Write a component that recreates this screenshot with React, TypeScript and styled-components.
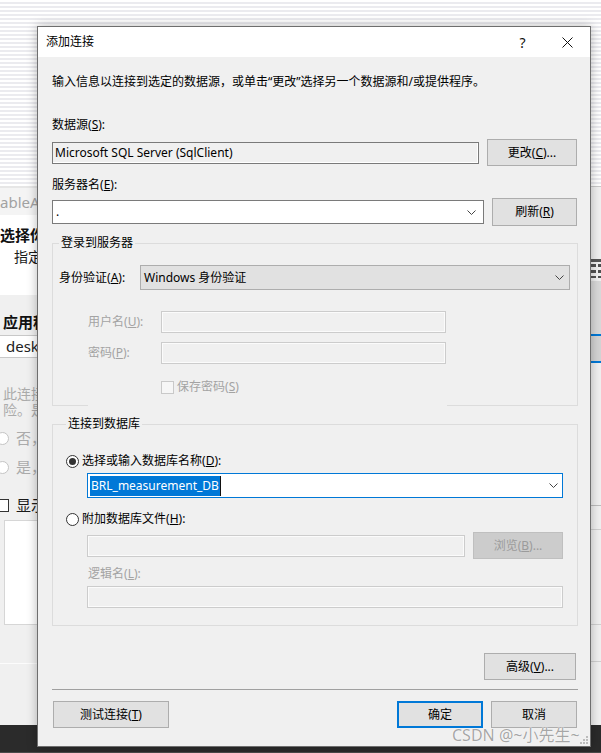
import React from "react";
import styled, { createGlobalStyle } from "styled-components";

const UI = `"Noto Sans", "Noto Sans CJK SC", sans-serif`;

const GlobalStyle = createGlobalStyle`
  html, body { margin: 0; padding: 0; background: #ffffff; }
  body { font-family: ${UI}; }
  * { box-sizing: border-box; }
`;

/* ---------- desktop / background window ---------- */

const Desktop = styled.div`
  position: relative;
  width: 601px;
  height: 753px;
  overflow: hidden;
  display: flex;
  flex-direction: column;
  background: #ffffff;
`;

const Stripes = styled.div`
  height: 186px;
  flex: none;
  background: repeating-linear-gradient(to bottom, #ffffff 0 2px, #ebebef 2px 4px);
`;

const BackBody = styled.div`
  flex: 1;
  display: grid;
  grid-template-columns: 1fr 11px;
  min-height: 0;
`;

const LeftPane = styled.div`
  display: flex;
  flex-direction: column;
  overflow: hidden;
  white-space: nowrap;
  font-family: ${UI};
  font-size: 15px;
  border-top: 2px solid #e6e6e6;
`;

const HintRow = styled.div`
  height: 27px;
  flex: none;
  line-height: 29px;
  background: #f4f4f4;
  color: #a2a2a2;
`;

const WhiteBlock = styled.div`
  height: 80px;
  flex: none;
  background: #ffffff;
  display: flex;
  flex-direction: column;
`;

const BackHeading = styled.div<{ $top: number; $left?: number }>`
  margin-top: ${(p) => p.$top}px;
  padding-left: ${(p) => p.$left ?? 0}px;
  line-height: 18px;
  font-weight: 700;
  color: #111;
`;

const BackText = styled.div<{ $top: number; $left?: number; $muted?: boolean }>`
  margin-top: ${(p) => p.$top}px;
  padding-left: ${(p) => p.$left ?? 0}px;
  font-size: 14px;
  line-height: 16px;
  color: ${(p) => (p.$muted ? "#ababab" : "#1a1a1a")};
`;

const BackPara = styled.div`
  margin-top: 28px;
  padding-left: 3px;
  font-size: 14px;
  line-height: 16px;
  white-space: pre;
  color: #ababab;
`;

const GrayBlock = styled.div`
  flex: 1;
  background: #f0f0f0;
  display: flex;
  flex-direction: column;
`;

const BackInput = styled.div`
  margin-top: 4px;
  margin-left: -1px;
  height: 23px;
  background: #ffffff;
  border: 1px solid #c8c8c8;
  padding-left: 6px;
  line-height: 21px;
  color: #222;
`;

const BackOptionRow = styled.div<{ $top: number; $muted?: boolean }>`
  margin-top: ${(p) => p.$top}px;
  height: 16px;
  display: flex;
  align-items: center;
  gap: 7px;
  margin-left: -4px;
  color: ${(p) => (p.$muted ? "#ababab" : "#1a1a1a")};
  line-height: 16px;
`;

const BackRadio = styled.span`
  width: 13px;
  height: 13px;
  flex: none;
  border-radius: 50%;
  border: 1px solid #c4c4c4;
  background: #fff;
`;

const BackCheck = styled.span`
  width: 13px;
  height: 13px;
  flex: none;
  border: 1px solid #333;
  background: #fff;
`;

const BackPanel = styled.div`
  margin-top: 7px;
  margin-left: 4px;
  height: 105px;
  flex: none;
  background: #ffffff;
  border: 1px solid #d6d6d6;
`;

const BackLine = styled.div`
  margin-top: 38px;
  height: 1px;
  background: #fcfcfc;
`;

const RightPane = styled.div`
  display: flex;
  flex-direction: column;
  border-top: 1px solid #c9c9c9;
  background: #f0f0f0;
  overflow: hidden;
`;

const RBand = styled.div<{ $h: number; $bg: string }>`
  height: ${(p) => p.$h}px;
  flex: none;
  background: ${(p) => p.$bg};
`;

const RGlyph = styled.div`
  height: 22px;
  flex: none;
  border-top: 3px solid #555;
  padding-top: 2px;
  display: flex;
  gap: 2px;
`;

const RGlyphBar = styled.span<{ $w: number }>`
  width: ${(p) => p.$w}px;
  height: 14px;
  background: repeating-linear-gradient(to bottom, #505050 0 3px, transparent 3px 6px);
`;

const Taskbar = styled.div`
  height: 28px;
  flex: none;
  background: #2b2b2b;
  border-bottom: 1px solid #4a4a4a;
`;

/* ---------- dialog ---------- */

const Dialog = styled.div`
  position: absolute;
  left: 37px;
  top: 26px;
  width: 554px;
  height: 721px;
  background: #f0f0f0;
  border: 1px solid #6e6e6e;
  box-shadow: 0 0 10px rgba(0, 0, 0, 0.28);
  display: flex;
  flex-direction: column;
  font-family: ${UI};
  font-size: 12px;
  color: #000;
`;

const TitleBar = styled.div`
  height: 30px;
  flex: none;
  background: #ffffff;
  display: flex;
  align-items: center;
  padding-left: 8px;
`;

const TitleText = styled.div`
  flex: 1;
  font-size: 12px;
  line-height: 16px;
`;

const CaptionBtn = styled.div`
  width: 45px;
  height: 30px;
  display: flex;
  align-items: center;
  justify-content: center;
  font-size: 14px;
  color: #111;
`;

const Body = styled.div`
  flex: 1;
  display: flex;
  flex-direction: column;
  padding: 17px 12px 0 14px;
`;

const Line = styled.div<{ $top: number; $left?: number; $disabled?: boolean }>`
  margin-top: ${(p) => p.$top}px;
  margin-left: ${(p) => p.$left ?? 0}px;
  line-height: 16px;
  height: 16px;
  white-space: nowrap;
  color: ${(p) => (p.$disabled ? "#a3a3a3" : "#000")};
`;

const Row = styled.div<{ $top: number; $h: number; $left?: number; $right?: number }>`
  margin-top: ${(p) => p.$top}px;
  margin-left: ${(p) => p.$left ?? 0}px;
  margin-right: ${(p) => p.$right ?? 0}px;
  height: ${(p) => p.$h}px;
  display: flex;
  align-items: center;
  gap: 8px;
  flex: none;
`;

const TextBox = styled.div<{ $disabled?: boolean; $w?: number }>`
  height: 22px;
  ${(p) => (p.$w ? `width: ${p.$w}px; flex: none;` : `flex: 1;`)}
  border: 1px solid ${(p) => (p.$disabled ? "#cccccc" : "#7a7a7a")};
  box-shadow: ${(p) => (p.$disabled ? "inset 0 0 0 1px #fbfbfb" : "inset -1px -1px 0 #ffffff")};
  background: #f0f0f0;
  display: flex;
  align-items: center;
  padding-left: 2px;
  line-height: 16px;
  white-space: nowrap;
`;

type ComboKind = "white" | "gray" | "focus";

const Combo = styled.div<{ $kind: ComboKind; $h: number; $pr: number }>`
  flex: 1;
  height: ${(p) => p.$h}px;
  display: flex;
  align-items: center;
  justify-content: space-between;
  padding: 0 ${(p) => p.$pr}px 0 ${(p) => (p.$kind === "focus" ? 2 : 3)}px;
  background: ${(p) => (p.$kind === "gray" ? "#e1e1e1" : "#ffffff")};
  border: 1px solid
    ${(p) => (p.$kind === "gray" ? "#adadad" : p.$kind === "focus" ? "#0078d7" : "#7a7a7a")};
  line-height: 16px;
  white-space: nowrap;
`;

const Selected = styled.span`
  display: inline-block;
  background: #0078d7;
  color: #ffffff;
  line-height: 20px;
  padding: 0 1px;
  border-right: 1px solid #111;
`;

const Btn = styled.button<{ $w: number; $h?: number; $primary?: boolean }>`
  width: ${(p) => p.$w}px;
  height: ${(p) => p.$h ?? 27}px;
  flex: none;
  margin: 0;
  padding: 0;
  background: #e1e1e1;
  border: ${(p) => (p.$primary ? "2px solid #0078d7" : "1px solid #adadad")};
  font-family: ${UI};
  font-size: 12px;
  line-height: 16px;
  color: #000;
  &:disabled {
    background: #cccccc;
    border-color: #bfbfbf;
    color: #9b9b9b;
  }
`;

const Group = styled.fieldset<{ $top: number; $pt: number; $pr: number; $pb: number; $pl: number; $gap?: boolean }>`
  position: relative;
  margin: ${(p) => p.$top}px 0 0 0;
  min-width: 0;
  flex: none;
  border: 1px solid #dcdcdc;
  padding: ${(p) => `${p.$pt}px ${p.$pr}px ${p.$pb}px ${p.$pl}px`};
  display: flex;
  flex-direction: column;
  &::after {
    content: "";
    display: ${(p) => (p.$gap ? "block" : "none")};
    position: absolute;
    left: 35px;
    bottom: -1px;
    width: 359px;
    height: 1px;
    background: #f0f0f0;
  }
`;

const Legend = styled.legend`
  padding: 0 2px;
  line-height: 16px;
  font-size: 12px;
`;

const FieldLabel = styled.div<{ $w: number; $pl?: number; $disabled?: boolean }>`
  width: ${(p) => p.$w}px;
  flex: none;
  margin-right: -8px;
  padding-left: ${(p) => p.$pl ?? 0}px;
  line-height: 16px;
  white-space: nowrap;
  color: ${(p) => (p.$disabled ? "#a3a3a3" : "#000")};
`;

const CheckRow = styled.div<{ $top: number; $left: number }>`
  margin-top: ${(p) => p.$top}px;
  padding-left: ${(p) => p.$left}px;
  height: 14px;
  display: flex;
  align-items: center;
  gap: 3px;
  color: #a3a3a3;
  line-height: 16px;
`;

const CheckBox = styled.span`
  width: 13px;
  height: 13px;
  flex: none;
  border: 1px solid #c9c9c9;
  background: #f6f6f6;
`;

const RadioRow = styled.div<{ $top: number }>`
  margin-top: ${(p) => p.$top}px;
  height: 16px;
  display: flex;
  align-items: center;
  gap: 3px;
  line-height: 16px;
  white-space: nowrap;
`;

const Radio = styled.span<{ $checked?: boolean }>`
  width: 13px;
  height: 13px;
  flex: none;
  border-radius: 50%;
  border: 1px solid #333333;
  background: #ffffff;
  display: flex;
  align-items: center;
  justify-content: center;
  &::after {
    content: "";
    display: ${(p) => (p.$checked ? "block" : "none")};
    width: 7px;
    height: 7px;
    border-radius: 50%;
    background: #333333;
  }
`;

const ButtonRow = styled.div<{ $top: number }>`
  margin-top: ${(p) => p.$top}px;
  display: flex;
  align-items: center;
  gap: 8px;
  padding: 0 1px;
`;

const Spacer = styled.div`
  flex: 1;
`;

const Separator = styled.div`
  margin-top: 9px;
  height: 1px;
  background: #a0a0a0;
  flex: none;
`;

const Watermark = styled.div`
  position: absolute;
  left: 452px;
  top: 725px;
  font-family: ${UI};
  font-size: 16px;
  line-height: 20px;
  white-space: nowrap;
  color: rgba(150, 150, 150, 0.85);
  text-shadow: 0 0 1px #ffffff, 0 0 1px #ffffff;
`;

const Grip = styled.svg`
  position: absolute;
  right: 2px;
  bottom: 2px;
`;

const Chevron = () => (
  <svg width="9" height="5" viewBox="0 0 9 5" style={{ flex: "none" }}>
    <polyline points="0.5,0.5 4.5,4.5 8.5,0.5" fill="none" stroke="#444" strokeWidth="1" />
  </svg>
);

const CloseIcon = () => (
  <svg width="11" height="11" viewBox="0 0 11 11">
    <path d="M0.5 0.5 L10.5 10.5 M10.5 0.5 L0.5 10.5" stroke="#111" strokeWidth="1" fill="none" />
  </svg>
);

const M = ({ k }: { k: string }) => (
  <>
    (<u>{k}</u>)
  </>
);

export default function App() {
  return (
    <>
      <GlobalStyle />
      <Desktop>
        <Stripes />
        <BackBody>
          <LeftPane>
            <HintRow>ableAd</HintRow>
            <WhiteBlock>
              <BackHeading $top={11}>选择你</BackHeading>
              <BackText $top={5} $left={14}>指定数</BackText>
            </WhiteBlock>
            <GrayBlock>
              <BackHeading $top={18} $left={3}>应用程序</BackHeading>
              <BackInput>desktop</BackInput>
              <BackPara>{"此连接字\n险。是否"}</BackPara>
              <BackOptionRow $top={12} $muted>
                <BackRadio />
                <span>否，从</span>
              </BackOptionRow>
              <BackOptionRow $top={13} $muted>
                <BackRadio />
                <span>是，在</span>
              </BackOptionRow>
              <BackOptionRow $top={22}>
                <BackCheck />
                <span>显示连</span>
              </BackOptionRow>
              <BackPanel />
              <BackLine />
            </GrayBlock>
          </LeftPane>
          <RightPane>
            <RBand $h={72} $bg="#f0f0f0" />
            <RGlyph>
              <RGlyphBar $w={6} />
              <RGlyphBar $w={3} />
            </RGlyph>
            <RBand $h={53} $bg="#d9d9d9" />
            <RBand $h={2} $bg="#0078d7" />
            <RBand $h={25} $bg="#d4d4d4" />
            <RBand $h={2} $bg="#0078d7" />
            <RBand $h={142} $bg="#f0f0f0" />
            <RBand $h={1} $bg="#bdbdbd" />
            <RBand $h={23} $bg="#f0f0f0" />
            <RBand $h={1} $bg="#d0d0d0" />
            <RBand $h={94} $bg="#f0f0f0" />
            <RBand $h={1} $bg="#d0d0d0" />
            <RBand $h={36} $bg="#f0f0f0" />
            <RBand $h={1} $bg="#d0d0d0" />
          </RightPane>
        </BackBody>
        <Taskbar />

        <Dialog>
          <TitleBar>
            <TitleText>添加连接</TitleText>
            <CaptionBtn>?</CaptionBtn>
            <CaptionBtn>
              <CloseIcon />
            </CaptionBtn>
          </TitleBar>
          <Body>
            <Line $top={0}>输入信息以连接到选定的数据源，或单击“更改”选择另一个数据源和/或提供程序。</Line>

            <Line $top={27}>
              数据源<M k="S" />:
            </Line>
            <Row $top={6} $h={27} $right={1}>
              <TextBox>Microsoft SQL Server (SqlClient)</TextBox>
              <Btn $w={90}>
                更改<M k="C" />...
              </Btn>
            </Row>

            <Line $top={11}>
              服务器名<M k="E" />:
            </Line>
            <Row $top={5} $h={28} $right={1}>
              <Combo $kind="white" $h={24} $pr={7}>
                <span>.</span>
                <Chevron />
              </Combo>
              <Btn $w={85} $h={28}>
                刷新<M k="R" />
              </Btn>
            </Row>

            <Group $top={9} $pt={14} $pr={7} $pb={11} $pl={6} $gap>
              <Legend>登录到服务器</Legend>
              <Row $top={0} $h={25}>
                <FieldLabel $w={81}>
                  身份验证<M k="A" />:
                </FieldLabel>
                <Combo $kind="gray" $h={25} $pr={5}>
                  <span>Windows 身份验证</span>
                  <Chevron />
                </Combo>
              </Row>
              <Row $top={21} $h={22}>
                <FieldLabel $w={102} $pl={29} $disabled>
                  用户名<M k="U" />:
                </FieldLabel>
                <TextBox $w={285} $disabled />
              </Row>
              <Row $top={9} $h={22}>
                <FieldLabel $w={102} $pl={29} $disabled>
                  密码<M k="P" />:
                </FieldLabel>
                <TextBox $w={285} $disabled />
              </Row>
              <CheckRow $top={16} $left={102}>
                <CheckBox />
                <span>
                  保存密码<M k="S" />
                </span>
              </CheckRow>
            </Group>

            <Group $top={10} $pt={21} $pr={14} $pb={17} $pl={13}>
              <Legend>连接到数据库</Legend>
              <RadioRow $top={0}>
                <Radio $checked />
                <span>
                  选择或输入数据库名称<M k="D" />:
                </span>
              </RadioRow>
              <Row $top={4} $h={25} $left={21}>
                <Combo $kind="focus" $h={25} $pr={4}>
                  <Selected>BRL_measurement_DB</Selected>
                  <Chevron />
                </Combo>
              </Row>
              <RadioRow $top={13}>
                <Radio />
                <span>
                  附加数据库文件<M k="H" />:
                </span>
              </RadioRow>
              <Row $top={5} $h={27} $left={21}>
                <TextBox $disabled />
                <Btn $w={90} disabled>
                  浏览<M k="B" />...
                </Btn>
              </Row>
              <Line $top={7} $left={22} $disabled>
                逻辑名<M k="L" />:
              </Line>
              <Row $top={4} $h={22} $left={21}>
                <TextBox $disabled />
              </Row>
            </Group>

            <ButtonRow $top={27}>
              <Spacer />
              <Btn $w={92} style={{ marginRight: 1 }}>
                高级<M k="V" />...
              </Btn>
            </ButtonRow>
            <Separator />
            <ButtonRow $top={11}>
              <Btn $w={116}>
                测试连接<M k="T" />
              </Btn>
              <Spacer />
              <Btn $w={86} $primary>
                确定
              </Btn>
              <Btn $w={86}>取消</Btn>
            </ButtonRow>
          </Body>
          <Grip width="8" height="8" viewBox="0 0 8 8">
            {[
              [6, 0],
              [6, 3],
              [3, 3],
              [6, 6],
              [3, 6],
              [0, 6],
            ].map(([x, y], i) => (
              <rect key={i} x={x} y={y} width="2" height="2" fill="#bcbcbc" />
            ))}
          </Grip>
        </Dialog>
        <Watermark>CSDN @~小先生~</Watermark>
      </Desktop>
    </>
  );
}
